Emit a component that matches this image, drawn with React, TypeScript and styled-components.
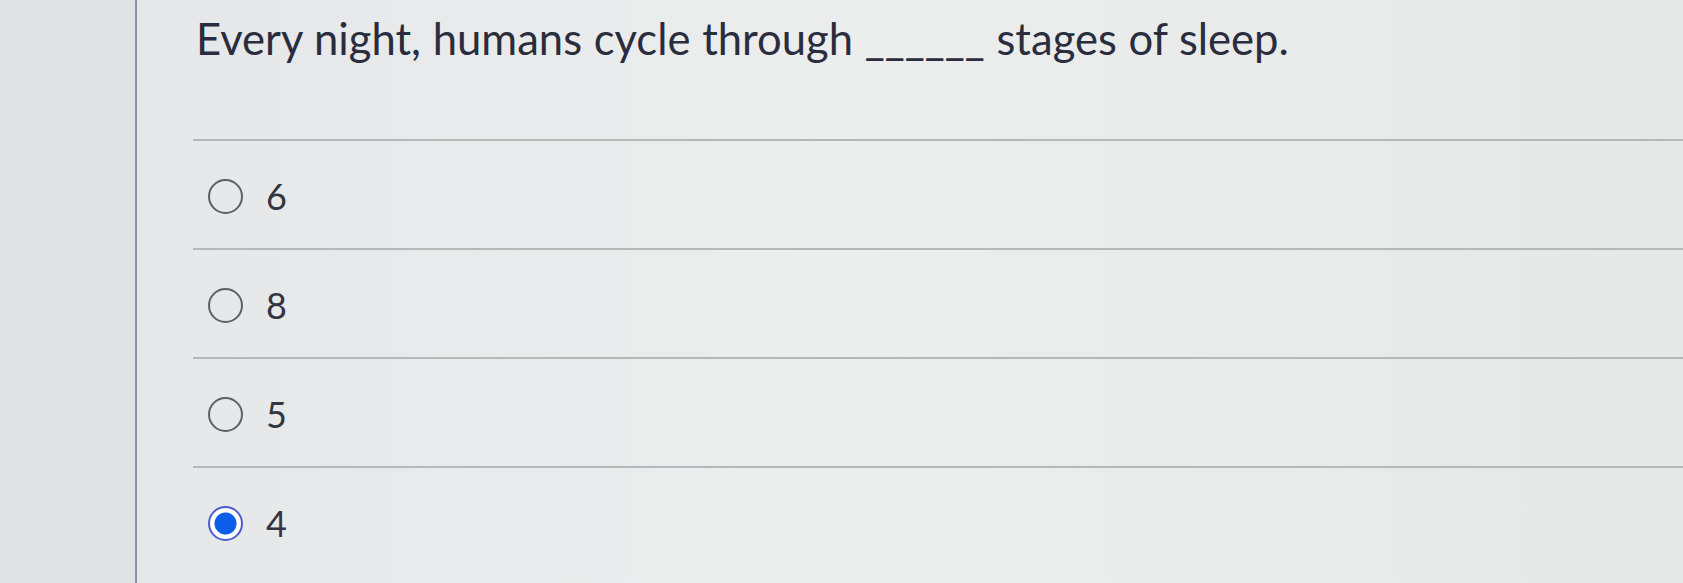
import React, { useState } from "react";
import styled, { createGlobalStyle } from "styled-components";

const GlobalStyle = createGlobalStyle`
  html, body {
    margin: 0;
    padding: 0;
    background: #e6e8e8;
  }
  body {
    font-family: Lato, "Open Sans", "Liberation Sans", sans-serif;
    color: #2e3240;
  }
`;

const Page = styled.div`
  display: flex;
  width: 1683px;
  height: 583px;
  overflow: hidden;
`;

const Rail = styled.div`
  width: 135px;
  flex-shrink: 0;
  background: #dfe1e3;
  border-right: 2px solid #8d93a4;
`;

const Main = styled.main`
  flex: 1;
  padding-left: 56px;
  background: linear-gradient(90deg, #e5e7e8 0%, #eceeee 45%, #e9ebeb 75%, #e6e8e8 100%);
`;

const Question = styled.h1`
  margin: 12px 0 0 3px;
  font-size: 43.6px;
  font-weight: 400;
  line-height: 1.2;
  color: #2a2d3e;
  word-spacing: 0.5px;
`;

const Options = styled.div`
  margin-top: 75px;
  display: flex;
  flex-direction: column;
`;

const Option = styled.label`
  display: flex;
  align-items: center;
  gap: 23px;
  height: 109px;
  padding: 3px 0 0 15px;
  box-sizing: border-box;
  border-top: 2px solid #b5b7ba;
  cursor: pointer;
`;

const Radio = styled.input.attrs({ type: "radio" })`
  appearance: none;
  margin: 0;
  width: 35px;
  height: 35px;
  border-radius: 50%;
  box-sizing: border-box;
  border: 2.5px solid #5d5f66;
  background: transparent;
  flex-shrink: 0;
  cursor: pointer;

  &:checked {
    border: 2.5px solid #4e5bd0;
    background: radial-gradient(circle, #0a5ee9 0 10.5px, #ffffff 11.5px);
  }
`;

const Label = styled.span`
  font-size: 36px;
  color: #333540;
  line-height: 1;
`;

const answers = ["6", "8", "5", "4"];

export default function App() {
  const [picked, setPicked] = useState("4");
  return (
    <>
      <GlobalStyle />
      <Page>
        <Rail />
        <Main>
          <Question>Every night, humans cycle through ______ stages of sleep.</Question>
          <Options>
            {answers.map((a) => (
              <Option key={a}>
                <Radio
                  name="stages"
                  checked={picked === a}
                  onChange={() => setPicked(a)}
                />
                <Label>{a}</Label>
              </Option>
            ))}
          </Options>
        </Main>
      </Page>
    </>
  );
}
